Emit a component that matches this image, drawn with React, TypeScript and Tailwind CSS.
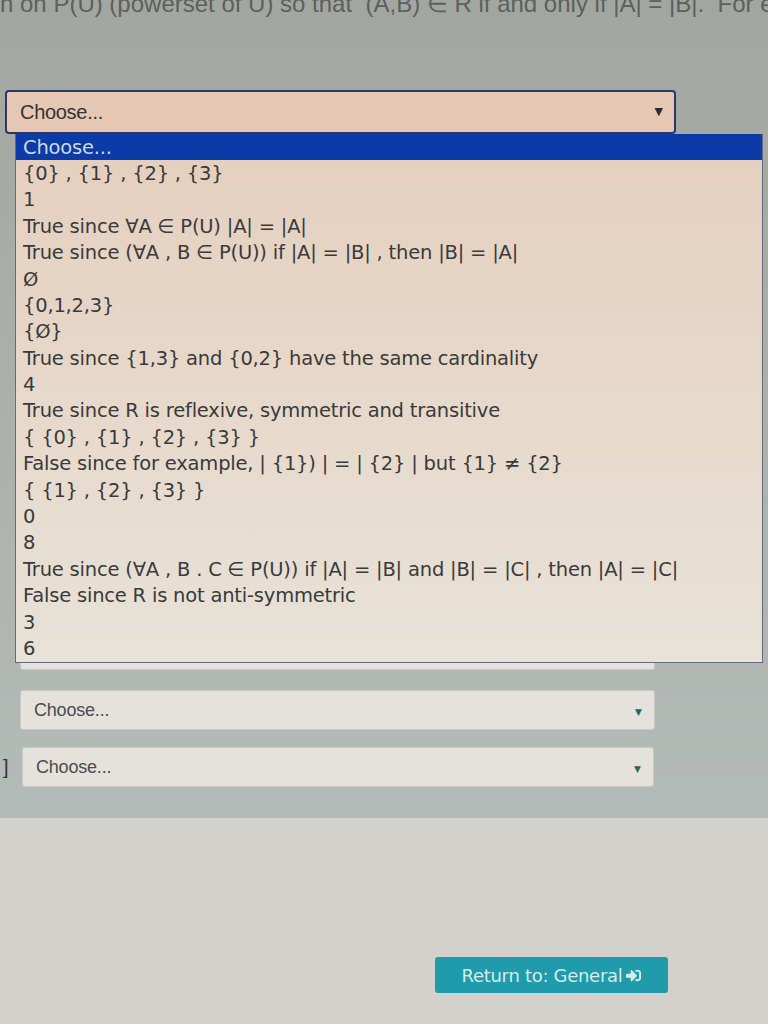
import { FaSignInAlt } from 'react-icons/fa'

const options = [
  'Choose...',
  '{0} , {1} , {2} , {3}',
  '1',
  'True since \u2200A \u2208 P(U) |A| = |A|',
  'True since (\u2200A , B \u2208 P(U)) if |A| = |B| , then |B| = |A|',
  '\u00d8',
  '{0,1,2,3}',
  '{\u00d8}',
  'True since {1,3} and {0,2} have the same cardinality',
  '4',
  'True since R is reflexive, symmetric and transitive',
  '{ {0} , {1} , {2} , {3} }',
  'False since for example, | {1}) | = | {2} | but {1} \u2260 {2}',
  '{ {1} , {2} , {3} }',
  '0',
  '8',
  'True since (\u2200A , B . C \u2208 P(U)) if |A| = |B| and |B| = |C| , then |A| = |C|',
  'False since R is not anti-symmetric',
  '3',
  '6',
]

function Select({ className = '' }: { className?: string }) {
  return (
    <div
      className={`flex items-center justify-between h-[40px] rounded-[3px] border border-[#c9c8c2] bg-[#e5e2db] pl-[13px] pr-[12px] ${className}`}
    >
      <span className="text-[18px] text-[#4a4d50] font-['Liberation_Sans',sans-serif] tracking-[-0.2px]">Choose...</span>
      <span className="text-[9px] text-[#2e5e6c] mt-[6px]">▼</span>
    </div>
  )
}

export default function App() {
  return (
    <div className="relative w-[768px] h-[1024px] overflow-hidden bg-[#d3d1cb] font-['DejaVu_Sans',sans-serif]">
      {/* quiz area */}
      <div className="relative bg-linear-to-b from-[#a2a6a1] via-[#abb0ab] to-[#b3bbb8] h-[818px] overflow-hidden">
        <div className="-mt-[10px] whitespace-nowrap text-[24px] text-[#5d605c] font-['Liberation_Sans',sans-serif] leading-[28px]">
          n on P(U) (powerset of U) so that &nbsp;(A,B) ∈ R if and only if |A| = |B|. &nbsp;For e
        </div>

        {/* focused select */}
        <div className="mt-[72px] ml-[5px] w-[671px] h-[44px] flex items-center justify-between rounded-[4px] border-2 border-[#2c3767] bg-[#e5c7b4] pl-[13px] pr-[11px]">
          <span className="text-[20px] text-[#333] font-['Liberation_Sans',sans-serif] tracking-[-0.3px]">Choose...</span>
          <span className="text-[11px] text-[#2a2a2a]">▼</span>
        </div>

        <div className="mt-[496px] ml-[20px] w-[635px]">
          <Select />
        </div>
        <div className="mt-[20px] ml-[20px] w-[635px]">
          <Select />
        </div>
        <div className="mt-[17px] flex items-center">
          <span className="w-[22px] pl-[3px] text-[20px] text-[#333] font-['Liberation_Sans',sans-serif]">]</span>
          <Select className="w-[632px]" />
        </div>

        {/* open option list */}
        <div className="absolute left-[15px] top-[134px] w-[748px] h-[529px] border border-t-0 border-[#666b7c] bg-linear-to-b from-[#e5cfbe] to-[#e8e2d8] overflow-hidden">
          {options.map((o, i) => (
            <div
              key={i}
              className={`h-[26.4px] flex items-center pl-[7px] whitespace-nowrap text-[19.5px] tracking-[-0.2px] ${
                i === 0 ? 'bg-[#0c3aa6] text-[#cfd8ec]' : 'text-[#3a3a3a]'
              }`}
            >
              {o}
            </div>
          ))}
        </div>
      </div>

      {/* footer */}
      <div className="flex justify-end pr-[100px] pt-[139px]">
        <button className="flex items-center gap-[4px] h-[36px] w-[233px] justify-center rounded-[3px] bg-[#1f9bab] text-[18px] text-[#d6ecef] font-['DejaVu_Sans',sans-serif] tracking-[-0.3px]">
          Return to: General
          <FaSignInAlt className="text-[15px] mt-[1px]" />
        </button>
      </div>
    </div>
  )
}
